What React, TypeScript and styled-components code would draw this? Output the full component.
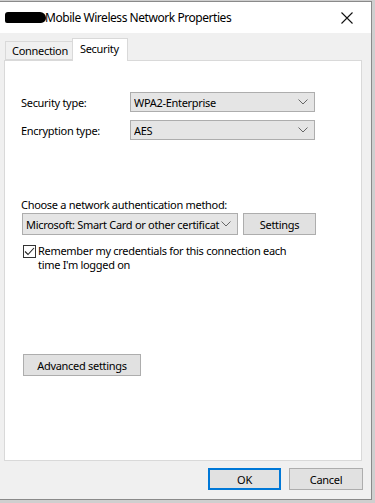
import React from 'react';
import styled, { createGlobalStyle } from 'styled-components';

const GlobalStyle = createGlobalStyle`
  html, body {
    margin: 0;
    padding: 0;
    background: #cfcfcf;
    font-family: "Noto Sans", "Open Sans", sans-serif;
    font-size: 11px;
    letter-spacing: -0.3px;
    color: #000;
  }
`;

const Window = styled.div`
  box-sizing: border-box;
  margin-top: 1px;
  width: 372px;
  height: 499px;
  border: 1px solid #8a8a8a;
  border-left: none;
  background: #f0f0f0;
  display: flex;
  flex-direction: column;
`;

const TitleBar = styled.div`
  height: 31px;
  flex: 0 0 31px;
  background: #fff;
  display: flex;
  align-items: center;
  padding-left: 5px;
`;

const Redacted = styled.span`
  display: inline-block;
  width: 41px;
  height: 11px;
  background: #000;
  border-radius: 3px 6px 5px 2px;
  margin-right: -1px;
  margin-top: -1px;
`;

const Title = styled.span`
  font-size: 12px;
  letter-spacing: -0.45px;
  margin-top: -1px;
`;

const CloseButton = styled.div`
  margin-left: auto;
  width: 46px;
  height: 31px;
  display: flex;
  align-items: center;
  justify-content: center;
  margin-right: 1px;
`;

const Body = styled.div`
  flex: 1;
  display: flex;
  flex-direction: column;
  padding: 0 9px 0 4px;
`;

const TabRow = styled.div`
  display: flex;
  align-items: flex-end;
  height: 27px;
  padding-left: 1px;
  position: relative;
  z-index: 1;
`;

const Tab = styled.div<{ $active?: boolean }>`
  box-sizing: border-box;
  height: ${(p) => (p.$active ? '23px' : '19px')};
  padding: ${(p) => (p.$active ? '2px 8px 0 7px' : '0 4px 0 6px')};
  margin-bottom: ${(p) => (p.$active ? '-1px' : '0')};
  background: ${(p) => (p.$active ? '#fff' : '#f0f0f0')};
  border: 1px solid #d9d9d9;
  border-bottom: ${(p) => (p.$active ? 'none' : '1px solid #d9d9d9')};
  border-right: ${(p) => (p.$active ? '1px solid #d9d9d9' : 'none')};
  display: flex;
  align-items: ${(p) => (p.$active ? 'flex-start' : 'center')};
  font-size: 11px;
  line-height: 16px;
`;

const Panel = styled.div`
  box-sizing: border-box;
  height: 401px;
  background: #fff;
  border: 1px solid #d9d9d9;
  padding: 31px 0 0 16px;
  display: flex;
  flex-direction: column;
`;

const FieldRow = styled.div`
  display: flex;
  align-items: center;
  height: 20px;
  margin-bottom: 8px;
`;

const FieldLabel = styled.div`
  width: 109px;
`;

const Select = styled.div<{ $width: number; $tall?: boolean }>`
  box-sizing: border-box;
  width: ${(p) => p.$width}px;
  height: ${(p) => (p.$tall ? 22 : 20)}px;
  background: #e5e5e5;
  border: 1px solid #adadad;
  display: flex;
  align-items: center;
  padding: 0 6px 0 3px;
  white-space: nowrap;
  overflow: hidden;
`;

const SelectText = styled.span`
  flex: 1;
  overflow: hidden;
`;

const MethodLabel = styled.div`
  margin-top: 49px;
  line-height: 16px;
`;

const MethodRow = styled.div`
  display: flex;
  gap: 5px;
  margin-left: 1px;
`;

const Button = styled.div<{ $width: number; $default?: boolean }>`
  box-sizing: border-box;
  width: ${(p) => p.$width}px;
  height: 22px;
  background: #e1e1e1;
  border: ${(p) => (p.$default ? '2px solid #0078d7' : '1px solid #adadad')};
  display: flex;
  align-items: center;
  justify-content: center;
`;

const CheckRow = styled.div`
  display: flex;
  align-items: flex-start;
  margin-top: 9px;
  margin-left: 2px;
`;

const CheckBox = styled.div`
  box-sizing: border-box;
  width: 13px;
  height: 13px;
  border: 1px solid #333;
  background: #fff;
  display: flex;
  align-items: center;
  justify-content: center;
  margin-top: 1px;
  margin-right: 2px;
  flex: 0 0 13px;
`;

const CheckText = styled.div`
  width: 250px;
  line-height: 14px;
`;

const AdvancedWrap = styled.div`
  margin-top: 82px;
  margin-left: 2px;
`;

const Footer = styled.div`
  display: flex;
  justify-content: flex-end;
  gap: 8px;
  padding-top: 7px;
  margin-right: -1px;
`;

const Chevron: React.FC = () => (
  <svg width="10" height="6" viewBox="0 0 10 6">
    <path d="M0.5 0.5 L5 5 L9.5 0.5" fill="none" stroke="#666" strokeWidth="1" />
  </svg>
);

const App: React.FC = () => {
  return (
    <>
      <GlobalStyle />
      <Window>
        <TitleBar>
          <Redacted />
          <Title>Mobile Wireless Network Properties</Title>
          <CloseButton>
            <svg width="12" height="12" viewBox="0 0 12 12">
              <path d="M0.5 0.5 L11.5 11.5 M11.5 0.5 L0.5 11.5" stroke="#111" strokeWidth="1.1" />
            </svg>
          </CloseButton>
        </TitleBar>
        <Body>
          <TabRow>
            <Tab>Connection</Tab>
            <Tab $active>Security</Tab>
          </TabRow>
          <Panel>
            <FieldRow>
              <FieldLabel>Security type:</FieldLabel>
              <Select $width={185}>
                <SelectText>WPA2-Enterprise</SelectText>
                <Chevron />
              </Select>
            </FieldRow>
            <FieldRow>
              <FieldLabel>Encryption type:</FieldLabel>
              <Select $width={185}>
                <SelectText>AES</SelectText>
                <Chevron />
              </Select>
            </FieldRow>
            <MethodLabel>Choose a network authentication method:</MethodLabel>
            <MethodRow>
              <Select $width={216} $tall>
                <SelectText>Microsoft: Smart Card or other certificat</SelectText>
                <Chevron />
              </Select>
              <Button $width={73}>Settings</Button>
            </MethodRow>
            <CheckRow>
              <CheckBox>
                <svg width="11" height="9" viewBox="0 0 11 9">
                  <path d="M1 4.5 L4 7.5 L10 1" fill="none" stroke="#222" strokeWidth="1.1" />
                </svg>
              </CheckBox>
              <CheckText>Remember my credentials for this connection each time I'm logged on</CheckText>
            </CheckRow>
            <AdvancedWrap>
              <Button $width={118}>Advanced settings</Button>
            </AdvancedWrap>
          </Panel>
          <Footer>
            <Button $width={73} $default>OK</Button>
            <Button $width={74}>Cancel</Button>
          </Footer>
        </Body>
      </Window>
    </>
  );
};

export default App;
